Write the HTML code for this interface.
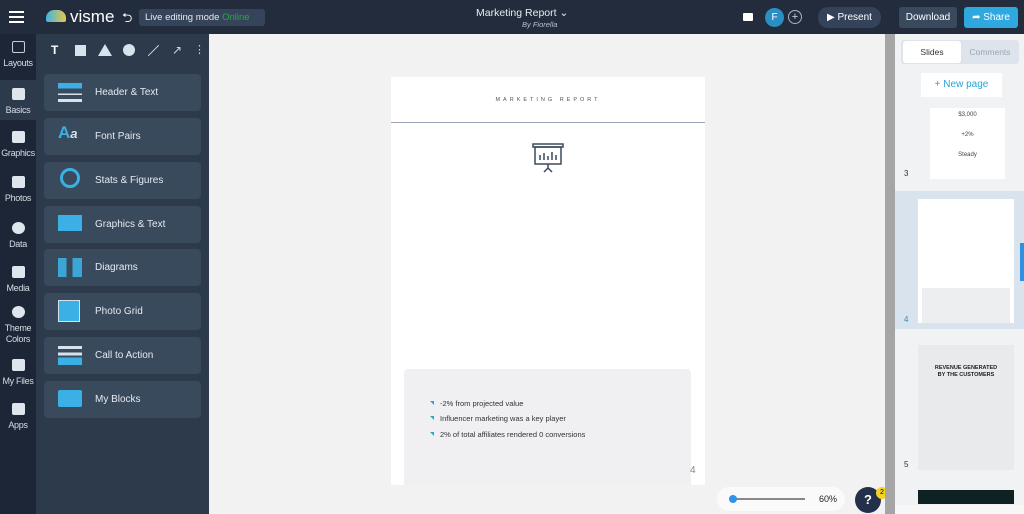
<!DOCTYPE html><html><head><meta charset="utf-8"><style>
*{box-sizing:border-box;margin:0;padding:0}
body{width:1024px;height:514px;overflow:hidden;background:#f2f2f2;font-family:"Liberation Sans",sans-serif;position:relative}
.a{position:absolute}
.top{left:0;top:0;width:1024px;height:34px;background:#222c3d}
.rail{left:0;top:34px;width:36px;height:480px;background:#1d2636}
.panel{left:36px;top:34px;width:173px;height:480px;background:#2c3a4c}
.ri{position:absolute;left:0;width:36px;text-align:center;color:#d6dde6;font-size:9px;line-height:11px;letter-spacing:-0.3px}
.ri i{display:block;width:13px;height:12px;margin:0 auto 5px;background:#dfe5ec;border-radius:2px}
.card{position:absolute;left:44px;width:157px;height:37px;background:#3a4a5d;border-radius:4px;color:#e5eaf0;font-size:10px;line-height:37px;padding-left:51px}
.card b{position:absolute;left:14px;top:9px;width:24px;height:19px}
.btn{position:absolute;top:7px;height:21px;border-radius:3px;color:#fff;font-size:10px;line-height:21px;text-align:center}
.page{left:391px;top:77px;width:314px;height:408px;background:#fff}
.li{position:absolute;left:430px;font-size:7.5px;color:#333}
.li:before{content:"";position:absolute;left:0;top:2px;border-left:4px solid transparent;border-top:4px solid #2ba3d6}
.li span{margin-left:10px}
</style></head><body>
<div class="a top"></div>
<div class="a" style="left:9px;top:11px;width:15px;height:2px;background:#fff;box-shadow:0 5px #fff,0 10px #fff"></div>
<div class="a" style="left:46px;top:10px;width:20px;height:12px;border-radius:8px 8px 2px 2px;background:linear-gradient(90deg,#3fb2e3,#e9c84a)"></div>
<div class="a" style="left:70px;top:7px;color:#fff;font-size:17px">visme</div>
<div class="a" style="left:122px;top:9px;color:#fff;font-size:13px">⮌</div>
<div class="a" style="left:139px;top:9px;width:126px;height:17px;background:#35445a;border-radius:3px;color:#e6ebf0;font-size:9.5px;line-height:17px;padding-left:6px">Live editing mode <span style="color:#27a845">Online</span></div>
<div class="a" style="left:476px;top:7px;color:#e8ecf0;font-size:10.5px">Marketing Report ⌄</div>
<div class="a" style="left:522px;top:20px;color:#b8c2cd;font-size:7.5px;font-style:italic">By Fiorella</div>
<div class="a" style="left:743px;top:13px;width:10px;height:8px;background:#fff;border-radius:1px"></div>
<div class="a" style="left:765px;top:8px;width:19px;height:19px;border-radius:50%;background:#2b8fc4;color:#fff;font-size:10px;text-align:center;line-height:19px">F</div>
<div class="a" style="left:788px;top:10px;width:14px;height:14px;border-radius:50%;border:1px solid #aab4c0;color:#d0d7df;font-size:11px;text-align:center;line-height:12px">+</div>
<div class="btn" style="left:818px;width:63px;background:#34425a;border-radius:10px">▶ Present</div>
<div class="btn" style="left:899px;width:58px;background:#3a4a5e">Download</div>
<div class="btn" style="left:964px;width:54px;background:#2fa8df">➦ Share</div>

<div class="a rail"></div>
<div class="a" style="left:0;top:80px;width:36px;height:40px;background:#2c3a4c"></div>
<div class="ri" style="top:41px"><i style="background:none;border:1px solid #c5ced8"></i>Layouts</div>
<div class="ri" style="top:88px"><i></i>Basics</div>
<div class="ri" style="top:131px"><i></i>Graphics</div>
<div class="ri" style="top:176px"><i></i>Photos</div>
<div class="ri" style="top:222px"><i style="border-radius:50%"></i>Data</div>
<div class="ri" style="top:266px"><i></i>Media</div>
<div class="ri" style="top:306px"><i style="border-radius:50%"></i>Theme<br>Colors</div>
<div class="ri" style="top:359px"><i></i>My Files</div>
<div class="ri" style="top:403px"><i></i>Apps</div>

<div class="a panel"></div>
<div class="a" style="left:51px;top:43px;color:#fff;font-size:12px;font-weight:bold">T</div>
<div class="a" style="left:75px;top:45px;width:11px;height:11px;background:#d8e2ec"></div>
<div class="a" style="left:98px;top:44px;border-left:7px solid transparent;border-right:7px solid transparent;border-bottom:12px solid #d8e2ec"></div>
<div class="a" style="left:123px;top:44px;width:12px;height:12px;border-radius:50%;background:#d8e2ec"></div>
<div class="a" style="left:146px;top:50px;width:15px;height:1px;background:#cfd8e2;transform:rotate(-45deg)"></div>
<div class="a" style="left:172px;top:43px;color:#cfd8e2;font-size:12px">↗</div>
<div class="a" style="left:194px;top:43px;color:#cfd8e2;font-size:11px">⋮</div>

<div class="card" style="top:74px"><b style="background:linear-gradient(#3bb0e4 0 30%,transparent 30% 55%,#d8e2ec 55% 62%,transparent 62% 85%,#d8e2ec 85%)"></b>Header &amp; Text</div>
<div class="card" style="top:118px"><b style="color:#3bb0e4;font-size:17px;line-height:17px;top:6px">A<span style="color:#d8e2ec;font-style:italic;font-size:13px">a</span></b>Font Pairs</div>
<div class="card" style="top:162px"><b style="border:3px solid #3bb0e4;border-radius:50%;width:20px;height:20px;top:6px;left:16px"></b>Stats &amp; Figures</div>
<div class="card" style="top:206px"><b style="background:#3bb0e4;height:16px"></b>Graphics &amp; Text</div>
<div class="card" style="top:249px"><b style="background:linear-gradient(90deg,#3bb0e4 0 35%,transparent 35% 60%,#3bb0e4 60%);opacity:.9"></b>Diagrams</div>
<div class="card" style="top:293px"><b style="border:1px solid #d8e2ec;background:#3bb0e4;width:22px;height:22px;top:7px"></b>Photo Grid</div>
<div class="card" style="top:337px"><b style="background:linear-gradient(#d8e2ec 0 15%,transparent 15% 35%,#d8e2ec 35% 50%,transparent 50% 60%,#3bb0e4 60%)"></b>Call to Action</div>
<div class="card" style="top:381px"><b style="background:#3bb0e4;border-radius:2px;height:17px"></b>My Blocks</div>

<div class="a page"></div>
<div class="a" style="left:391px;top:122px;width:314px;height:1px;background:#9aa6b8"></div>
<div class="a" style="left:391px;top:97px;width:314px;text-align:center;font-size:5.5px;letter-spacing:3px;color:#555">MARKETING REPORT</div>
<svg class="a" style="left:532px;top:143px" width="32" height="30" viewBox="0 0 32 30" fill="none" stroke="#3c4a5c" stroke-width="1.5"><rect x="1" y="1" width="30" height="3"/><rect x="3" y="4" width="26" height="17"/><path d="M8 17v-5M12 17v-7M16 17v-4M20 17v-8M24 17v-5M16 21v4M12 29l4-4 4 4"/></svg>
<div class="a" style="left:404px;top:369px;width:287px;height:116px;background:#f0f0f2;border-radius:4px 4px 0 0"></div>
<div class="li" style="top:399px"><span>-2% from projected value</span></div>
<div class="li" style="top:414px"><span>Influencer marketing was a key player</span></div>
<div class="li" style="top:430px"><span>2% of total affiliates rendered 0 conversions</span></div>
<div class="a" style="left:690px;top:465px;font-size:10px;color:#888">4</div>

<div class="a" style="left:717px;top:487px;width:128px;height:24px;background:#fafafa;border-radius:12px"></div>
<div class="a" style="left:735px;top:498px;width:70px;height:2px;background:#888"></div>
<div class="a" style="left:729px;top:495px;width:8px;height:8px;border-radius:50%;background:#2f93e8"></div>
<div class="a" style="left:819px;top:494px;font-size:9px;color:#222">60%</div>
<div class="a" style="left:855px;top:487px;width:26px;height:26px;border-radius:50%;background:#22304a;color:#fff;font-size:13px;text-align:center;line-height:26px;font-weight:bold">?</div>
<div class="a" style="left:876px;top:487px;width:12px;height:12px;border-radius:50%;background:#f4d321;font-size:7px;text-align:center;line-height:12px">2</div>

<div class="a" style="left:885px;top:34px;width:10px;height:480px;background:#a5a5a5"></div>
<div class="a" style="left:895px;top:34px;width:129px;height:480px;background:#f1f2f4"></div>
<div class="a" style="left:901px;top:40px;width:118px;height:24px;background:#dde4ec;border-radius:3px"></div>
<div class="a" style="left:903px;top:41px;width:58px;height:22px;background:#fff;border-radius:3px;font-size:8.5px;color:#333;text-align:center;line-height:22px">Slides</div>
<div class="a" style="left:961px;top:41px;width:58px;height:22px;font-size:8.5px;color:#9aa5b2;text-align:center;line-height:22px">Comments</div>
<div class="a" style="left:921px;top:73px;width:81px;height:24px;background:#fff;font-size:10px;color:#2ba3d6;text-align:center;line-height:24px">+ New page</div>
<div class="a" style="left:930px;top:108px;width:75px;height:71px;background:#fff;font-size:6px;color:#444;text-align:center;padding-top:2px;line-height:10px">$3,000<br><br>+2%<br><br>Steady</div>
<div class="a" style="left:904px;top:169px;font-size:8px;color:#333">3</div>
<div class="a" style="left:895px;top:191px;width:129px;height:138px;background:#d9e3ee"></div>
<div class="a" style="left:918px;top:199px;width:96px;height:124px;background:#fff"></div>
<div class="a" style="left:922px;top:288px;width:88px;height:35px;background:#eceef0"></div>
<div class="a" style="left:1020px;top:243px;width:4px;height:38px;background:#2f8fe0"></div>
<div class="a" style="left:904px;top:315px;font-size:8px;color:#2b8fc4">4</div>
<div class="a" style="left:918px;top:345px;width:96px;height:125px;background:#e9eaec"></div>
<div class="a" style="left:918px;top:365px;width:96px;text-align:center;font-size:5.5px;font-weight:bold;color:#222;line-height:7px">REVENUE GENERATED<br>BY THE CUSTOMERS</div>
<div class="a" style="left:904px;top:460px;font-size:8px;color:#333">5</div>
<div class="a" style="left:918px;top:490px;width:96px;height:14px;background:#0e2224"></div>
<div class="a" style="left:895px;top:505px;width:129px;height:9px;background:#f7f7f7"></div>
</body></html>
